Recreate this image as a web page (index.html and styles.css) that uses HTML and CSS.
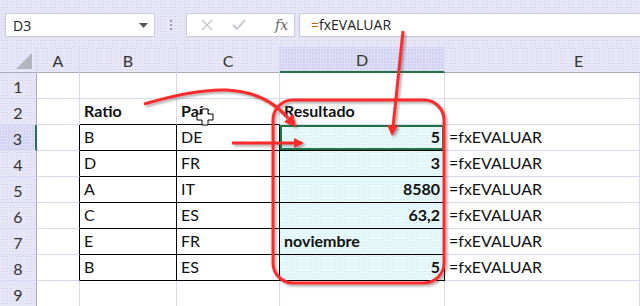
FILE: index.html
```html
<!DOCTYPE html>
<html lang="es">
<head>
    <meta charset="UTF-8">
    <title>fxEVALUAR</title>
    <link rel="stylesheet" href="styles.css">
</head>
<body>
    <div class="toolbar">
        <div class="namebox">
            <span>D3</span>
            <svg class="caret" width="9" height="5" viewBox="0 0 9 5"><path d="M0 0h9L4.5 5z" fill="#555"/></svg>
        </div>
        <div class="grip"><i></i><i></i><i></i></div>
        <div class="fbuttons">
            <svg width="12" height="12" viewBox="0 0 12 12"><path d="M1 1l10 10M11 1L1 11" stroke="#c4c4cc" stroke-width="1.4"/></svg>
            <svg width="14" height="12" viewBox="0 0 14 12"><path d="M1 6l4 4 8-9" stroke="#c4c4cc" stroke-width="1.8" fill="none"/></svg>
            <span class="fx">fx</span>
        </div>
        <div class="formula"><span class="eq">=</span>fxEVALUAR</div>
    </div>

    <div class="sheet">
        <div class="corner"><span></span></div>
        <div class="colhead">A</div>
        <div class="colhead">B</div>
        <div class="colhead">C</div>
        <div class="colhead sel">D</div>
        <div class="colhead last">E</div>

        <div class="rowhead">1</div>
        <div class="cell"></div><div class="cell"></div><div class="cell"></div><div class="cell"></div><div class="cell"></div>

        <div class="rowhead">2</div>
        <div class="cell"></div>
        <div class="cell bold bb">Ratio</div>
        <div class="cell bold bb">País</div>
        <div class="cell bold">Resultado</div>
        <div class="cell"></div>

        <div class="rowhead sel">3</div>
        <div class="cell br"></div>
        <div class="cell t">B</div>
        <div class="cell t">DE</div>
        <div class="cell t res num active">5</div>
        <div class="cell">=fxEVALUAR</div>

        <div class="rowhead">4</div>
        <div class="cell br"></div>
        <div class="cell t">D</div>
        <div class="cell t">FR</div>
        <div class="cell t res num">3</div>
        <div class="cell">=fxEVALUAR</div>

        <div class="rowhead">5</div>
        <div class="cell br"></div>
        <div class="cell t">A</div>
        <div class="cell t">IT</div>
        <div class="cell t res num">8580</div>
        <div class="cell">=fxEVALUAR</div>

        <div class="rowhead">6</div>
        <div class="cell br"></div>
        <div class="cell t">C</div>
        <div class="cell t">ES</div>
        <div class="cell t res num">63,2</div>
        <div class="cell">=fxEVALUAR</div>

        <div class="rowhead">7</div>
        <div class="cell br"></div>
        <div class="cell t">E</div>
        <div class="cell t">FR</div>
        <div class="cell t res bold">noviembre</div>
        <div class="cell">=fxEVALUAR</div>

        <div class="rowhead">8</div>
        <div class="cell br"></div>
        <div class="cell t">B</div>
        <div class="cell t">ES</div>
        <div class="cell t res num">5</div>
        <div class="cell">=fxEVALUAR</div>

        <div class="rowhead">9</div>
        <div class="cell"></div><div class="cell"></div><div class="cell"></div><div class="cell"></div><div class="cell"></div>
    </div>

    <!-- annotations drawn over the sheet -->
    <svg class="marks" width="640" height="306" viewBox="0 0 640 306">
        <g class="red">
            <rect x="273" y="100" width="171" height="183" rx="20" fill="none" stroke="#ff2b2b" stroke-width="3"/>
            <path d="M403 31L393 127" stroke="#ff2b2b" stroke-width="3" fill="none"/>
            <path d="M398 126L392 136 387 125z" fill="#ff2b2b"/>
            <path d="M144 104C205 86 255 80 288 118" stroke="#ff2b2b" stroke-width="3" fill="none"/>
            <path d="M293 114L296 127 284 122z" fill="#ff2b2b"/>
            <path d="M232 143H296" stroke="#ff2b2b" stroke-width="3" fill="none"/>
            <path d="M294 138L304 143 294 148z" fill="#ff2b2b"/>
        </g>
        <path class="cross" d="M202 109h6v5h5v6h-5v5h-6v-5h-5v-6h5z" fill="#fff" stroke="#000" stroke-width="1"/>
    </svg>
</body>
</html>
```

FILE: styles.css
```css
body {
    margin: 0;
    width: 640px;
    height: 306px;
    overflow: hidden;
    position: relative;
    background: #fff;
    font-family: Lato, "Liberation Sans", sans-serif;
}

.toolbar {
    height: 47px;
    box-sizing: border-box;
    padding-top: 13px;
    padding-left: 5px;
    display: flex;
    align-items: flex-start;
    background-color: #e6e6f6;
    background-image: radial-gradient(#d2d2ee 0.8px, transparent 0.9px);
    background-size: 3px 3px;
}

.namebox {
    width: 150px;
    height: 24px;
    box-sizing: border-box;
    background: #fff;
    border: 1px solid #cacad8;
    display: flex;
    align-items: center;
    justify-content: space-between;
    padding: 0 6px 0 7px;
    font-family: "Open Sans", sans-serif;
    font-size: 14px;
    color: #222;
}

.grip {
    width: 31px;
    height: 24px;
    display: flex;
    flex-direction: column;
    align-items: center;
    justify-content: center;
    gap: 2px;
}

.grip i {
    width: 2px;
    height: 2px;
    background: #9a9aa8;
}

.fbuttons {
    width: 109px;
    height: 24px;
    box-sizing: border-box;
    background: #fff;
    border: 1px solid #cacad8;
    display: flex;
    align-items: center;
    padding-left: 14px;
    gap: 19px;
}

.fx {
    font-family: "DejaVu Serif", serif;
    font-style: italic;
    font-size: 14px;
    color: #666;
    margin-left: 10px;
}

.formula {
    flex: 1;
    height: 24px;
    margin-left: 4px;
    box-sizing: border-box;
    background: #fff;
    border: 1px solid #cacad8;
    border-right: none;
    padding-left: 11px;
    font-family: "Open Sans", sans-serif;
    font-size: 14px;
    line-height: 22px;
    color: #222;
}

.eq {
    color: #b86a10;
}

.sheet {
    display: grid;
    grid-template-columns: 37px 43px 97px 103px 165px 1fr;
    grid-template-rows: repeat(10, 26px);
    font-size: 16px;
    color: #111;
}

.sheet > div {
    box-sizing: border-box;
    border-right: 1px solid #d8d8ee;
    border-bottom: 1px solid #d8d8ee;
    display: flex;
    align-items: flex-end;
    padding: 0 4px 4px 4px;
    white-space: nowrap;
    overflow: hidden;
}

.corner,
.colhead,
.rowhead {
    background-color: #e6e6f6;
    background-image: radial-gradient(#d4d4ee 0.8px, transparent 0.9px);
    background-size: 3px 3px;
    color: #333;
    justify-content: center;
}

.sheet > .colhead {
    border-bottom-color: #aaaabb;
    align-items: center;
    padding: 1px 0 0 0;
}

/* column E runs on past the window, so its label sits off-centre */
.sheet > .colhead.last {
    padding-left: 72px;
    border-right: none;
}

.sheet > .corner {
    border-bottom-color: #aaaabb;
    padding: 0 4px 3px 0;
    justify-content: flex-end;
}

.corner span {
    width: 0;
    height: 0;
    border-left: 16px solid transparent;
    border-bottom: 16px solid #b4b4bc;
}

.sheet > .rowhead {
    align-items: center;
    padding: 1px 0 0 0;
    border-right-color: #aaaabb;
}

.sheet > .colhead.sel {
    background-color: #d6d6f4;
    background-image: radial-gradient(#eeeefc 0.8px, transparent 0.9px);
    border-bottom: 2px solid #217346;
}

.sheet > .rowhead.sel {
    background-color: #d6d6f4;
    background-image: radial-gradient(#eeeefc 0.8px, transparent 0.9px);
    border-right: 2px solid #217346;
}

.bold {
    font-weight: bold;
}

.sheet > .bb {
    border-bottom-color: #000;
}

.sheet > .br {
    border-right-color: #000;
}

.sheet > .t {
    border-right-color: #000;
    border-bottom-color: #000;
}

.res {
    background-color: #e6f9fa;
    background-image: radial-gradient(#d6e8f2 0.7px, transparent 0.8px);
    background-size: 3px 3px;
}

.num {
    font-weight: bold;
    justify-content: flex-end;
}

.active {
    box-shadow: inset 0 0 0 2px #217346;
}

.marks {
    position: absolute;
    left: 0;
    top: 0;
    pointer-events: none;
}

.red {
    filter: drop-shadow(2px 2px 1px rgba(80, 80, 80, 0.45));
}
```
